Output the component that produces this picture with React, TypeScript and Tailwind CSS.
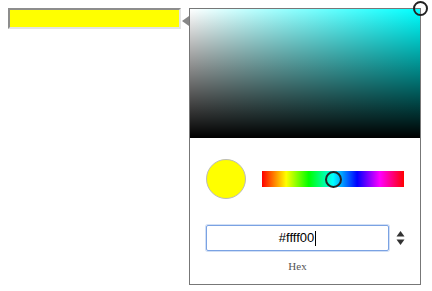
import React from 'react';

const App = () => {
  return (
    <div className="min-h-[291px] w-[432px] bg-white p-2 flex items-start" style={{ fontFamily: '"Liberation Sans", Arial, sans-serif' }}>
      {/* colour input swatch */}
      <div className="w-[173px] h-[21px] bg-[#ffff00] border-2 border-t-[#8d8d8d] border-l-[#8d8d8d] border-b-[#e4e4e4] border-r-[#e4e4e4]" />

      {/* pointer */}
      <svg width="8" height="10" viewBox="0 0 8 10" className="mt-[8px] shrink-0">
        <polygon points="8,0 8,10 1,5" fill="#888888" />
      </svg>

      {/* picker panel */}
      <div className="relative w-[232px] h-[277px] border border-[#777777] bg-white shrink-0">
        {/* saturation / value area */}
        <div className="relative h-[129px] w-full bg-[#00ffff]">
          <div className="absolute inset-0 bg-gradient-to-r from-white to-transparent" />
          <div className="absolute inset-0 bg-gradient-to-b from-transparent to-black" />
          <div className="absolute right-[-8px] top-[-8px] w-[15px] h-[15px] rounded-full border-2 border-[#222222]" />
        </div>

        {/* preview + hue */}
        <div className="mt-[21px] pl-4 flex items-center h-[40px]">
          <div className="w-[40px] h-[40px] rounded-full bg-[#ffff00] border border-[#bbbbbb]" />
          <div
            className="relative ml-[16px] w-[142px] h-[16px]"
            style={{
              background:
                'linear-gradient(to right, #ff0000 0%, #ffff00 17%, #00ff00 33%, #00ffff 50%, #0000ff 67%, #ff00ff 83%, #ff0000 100%)',
            }}
          >
            <div className="absolute left-[63px] top-[-0.5px] w-[17px] h-[17px] rounded-full border-2 border-[#222222]" />
          </div>
        </div>

        {/* hex input */}
        <div className="mt-[26px] pl-4 flex items-center">
          <div className="w-[183px] h-[26px] rounded-[2px] border border-[#7aa2e3] shadow-[0_0_0_1px_rgba(122,162,227,0.35)] flex items-center justify-center text-[13px] text-black">
            <span>#ffff00</span>
            <span className="inline-block w-px h-[15px] bg-black ml-[1px]" />
          </div>
          <svg width="9" height="16" viewBox="0 0 9 16" className="ml-[7px]">
            <polygon points="4.5,1 8.5,6.5 0.5,6.5" fill="#333333" />
            <polygon points="0.5,9.5 8.5,9.5 4.5,15" fill="#333333" />
          </svg>
        </div>
        <div
          className="mt-[9px] ml-4 w-[183px] text-center text-[11px] leading-[13px] text-[#555555]"
          style={{ fontFamily: '"Liberation Serif", "Times New Roman", serif' }}
        >
          Hex
        </div>
      </div>
    </div>
  );
};

export default App;
